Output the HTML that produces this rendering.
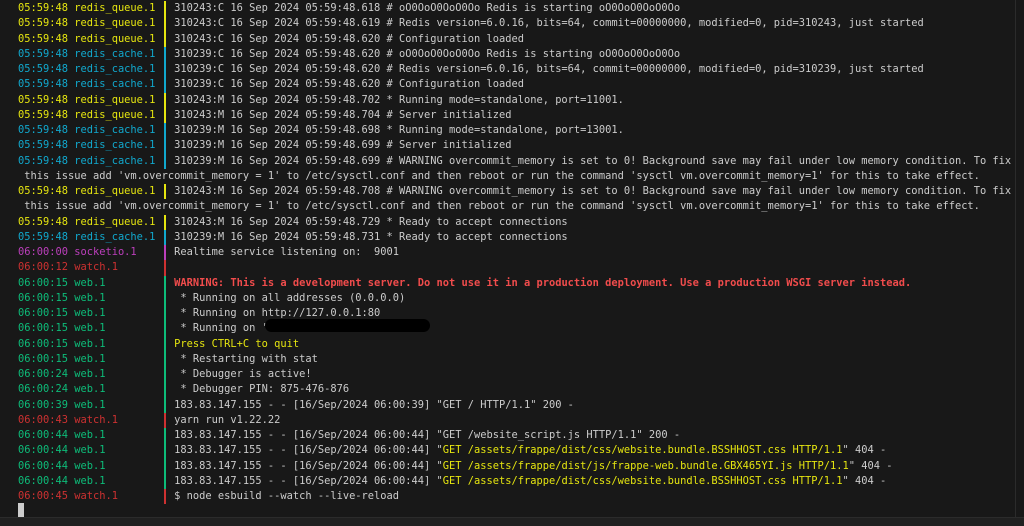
<!DOCTYPE html>
<html><head><meta charset="utf-8"><style>
html,body{margin:0;padding:0;background:#181818;width:1024px;height:525px;overflow:hidden}
pre{margin:0;position:absolute;left:18px;top:1px;font-family:"DejaVu Sans Mono","Liberation Mono",monospace;font-size:10.38px;line-height:15.25px;color:#cccccc;white-space:pre}
.y{color:#e5e510}.c{color:#11a8cd}.g{color:#0dbc79}.r{color:#cd3131}.m{color:#bc3fbc}.w{color:#f14c4c;font-weight:bold}
.b{display:inline-block;width:6.25px;height:15.25px;vertical-align:top;position:relative}
.b:before{content:"";position:absolute;left:2px;top:0;width:2px;height:15.25px;background:currentColor}
#sb{position:absolute;left:1015px;top:0;width:1px;height:517px;background:#2b2b2b}
#bot{position:absolute;left:0;top:517px;width:1024px;height:8px;background:#202020;border-top:1px solid #2b2b2b}
#cur{position:absolute;left:18px;top:503px;width:6px;height:15px;background:#cccccc}
#blot{position:absolute;left:265px;top:319px;width:165px;height:13px;background:#000;border-radius:7px}
</style></head><body>
<pre><span class="y">05:59:48 redis_queue.1 <span class="b"></span></span> 310243:C 16 Sep 2024 05:59:48.618 # oO0OoO0OoO0Oo Redis is starting oO0OoO0OoO0Oo
<span class="y">05:59:48 redis_queue.1 <span class="b"></span></span> 310243:C 16 Sep 2024 05:59:48.619 # Redis version=6.0.16, bits=64, commit=00000000, modified=0, pid=310243, just started
<span class="y">05:59:48 redis_queue.1 <span class="b"></span></span> 310243:C 16 Sep 2024 05:59:48.620 # Configuration loaded
<span class="c">05:59:48 redis_cache.1 <span class="b"></span></span> 310239:C 16 Sep 2024 05:59:48.620 # oO0OoO0OoO0Oo Redis is starting oO0OoO0OoO0Oo
<span class="c">05:59:48 redis_cache.1 <span class="b"></span></span> 310239:C 16 Sep 2024 05:59:48.620 # Redis version=6.0.16, bits=64, commit=00000000, modified=0, pid=310239, just started
<span class="c">05:59:48 redis_cache.1 <span class="b"></span></span> 310239:C 16 Sep 2024 05:59:48.620 # Configuration loaded
<span class="y">05:59:48 redis_queue.1 <span class="b"></span></span> 310243:M 16 Sep 2024 05:59:48.702 * Running mode=standalone, port=11001.
<span class="y">05:59:48 redis_queue.1 <span class="b"></span></span> 310243:M 16 Sep 2024 05:59:48.704 # Server initialized
<span class="c">05:59:48 redis_cache.1 <span class="b"></span></span> 310239:M 16 Sep 2024 05:59:48.698 * Running mode=standalone, port=13001.
<span class="c">05:59:48 redis_cache.1 <span class="b"></span></span> 310239:M 16 Sep 2024 05:59:48.699 # Server initialized
<span class="c">05:59:48 redis_cache.1 <span class="b"></span></span> 310239:M 16 Sep 2024 05:59:48.699 # WARNING overcommit_memory is set to 0! Background save may fail under low memory condition. To fix
 this issue add 'vm.overcommit_memory = 1' to /etc/sysctl.conf and then reboot or run the command 'sysctl vm.overcommit_memory=1' for this to take effect.
<span class="y">05:59:48 redis_queue.1 <span class="b"></span></span> 310243:M 16 Sep 2024 05:59:48.708 # WARNING overcommit_memory is set to 0! Background save may fail under low memory condition. To fix
 this issue add 'vm.overcommit_memory = 1' to /etc/sysctl.conf and then reboot or run the command 'sysctl vm.overcommit_memory=1' for this to take effect.
<span class="y">05:59:48 redis_queue.1 <span class="b"></span></span> 310243:M 16 Sep 2024 05:59:48.729 * Ready to accept connections
<span class="c">05:59:48 redis_cache.1 <span class="b"></span></span> 310239:M 16 Sep 2024 05:59:48.731 * Ready to accept connections
<span class="m">06:00:00 socketio.1    <span class="b"></span></span> Realtime service listening on:  9001
<span class="r">06:00:12 watch.1       <span class="b"></span></span>
<span class="g">06:00:15 web.1         <span class="b"></span></span> <span class="w">WARNING: This is a development server. Do not use it in a production deployment. Use a production WSGI server instead.</span>
<span class="g">06:00:15 web.1         <span class="b"></span></span>  * Running on all addresses (0.0.0.0)
<span class="g">06:00:15 web.1         <span class="b"></span></span>  * Running on http://127.0.0.1:80
<span class="g">06:00:15 web.1         <span class="b"></span></span>  * Running on '
<span class="g">06:00:15 web.1         <span class="b"></span></span> <span class="y">Press CTRL+C to quit</span>
<span class="g">06:00:15 web.1         <span class="b"></span></span>  * Restarting with stat
<span class="g">06:00:24 web.1         <span class="b"></span></span>  * Debugger is active!
<span class="g">06:00:24 web.1         <span class="b"></span></span>  * Debugger PIN: 875-476-876
<span class="g">06:00:39 web.1         <span class="b"></span></span> 183.83.147.155 - - [16/Sep/2024 06:00:39] "GET / HTTP/1.1" 200 -
<span class="r">06:00:43 watch.1       <span class="b"></span></span> yarn run v1.22.22
<span class="g">06:00:44 web.1         <span class="b"></span></span> 183.83.147.155 - - [16/Sep/2024 06:00:44] "GET /website_script.js HTTP/1.1" 200 -
<span class="g">06:00:44 web.1         <span class="b"></span></span> 183.83.147.155 - - [16/Sep/2024 06:00:44] "<span class="y">GET /assets/frappe/dist/css/website.bundle.BSSHHOST.css HTTP/1.1</span>" 404 -
<span class="g">06:00:44 web.1         <span class="b"></span></span> 183.83.147.155 - - [16/Sep/2024 06:00:44] "<span class="y">GET /assets/frappe/dist/js/frappe-web.bundle.GBX465YI.js HTTP/1.1</span>" 404 -
<span class="g">06:00:44 web.1         <span class="b"></span></span> 183.83.147.155 - - [16/Sep/2024 06:00:44] "<span class="y">GET /assets/frappe/dist/css/website.bundle.BSSHHOST.css HTTP/1.1</span>" 404 -
<span class="r">06:00:45 watch.1       <span class="b"></span></span> $ node esbuild --watch --live-reload
</pre>
<div id="blot"></div>
<div id="cur"></div>
<div id="sb"></div>
<div id="bot"></div>
</body></html>
